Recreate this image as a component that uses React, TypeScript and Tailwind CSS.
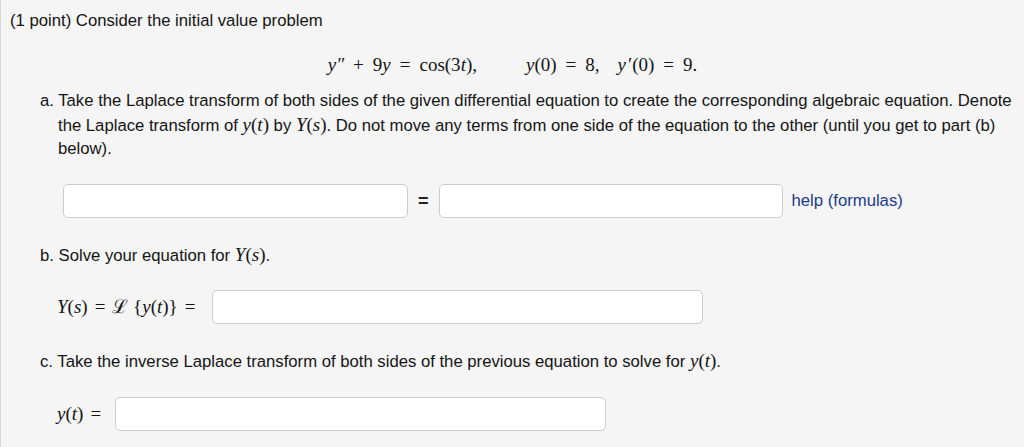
const serif = "font-['Liberation_Serif','Times_New_Roman',serif]";

function M({ children }: { children: React.ReactNode }) {
  return <span className={`${serif} text-[19px] italic`}>{children}</span>;
}

function R({ children }: { children: React.ReactNode }) {
  return <span className={`${serif} text-[19px] not-italic`}>{children}</span>;
}

function Op({ children, wide }: { children: React.ReactNode; wide?: boolean }) {
  return (
    <span className={`${serif} text-[19px] not-italic ${wide ? "mx-[9px]" : "mx-[7px]"}`}>
      {children}
    </span>
  );
}

function Field({ width }: { width: string }) {
  return (
    <input
      type="text"
      className={`${width} h-[34px] bg-white border border-[#cccccc] rounded-[5px] outline-none`}
    />
  );
}

export default function App() {
  return (
    <div className="w-[1024px] h-[447px] bg-[#f5f5f5] border-l border-[#d6d6d6] text-[#141414] font-['Liberation_Sans',Arial,sans-serif] text-[16.7px] overflow-hidden">
      <div className="pt-[11px] pl-[9px] h-[31px] flex items-end">
        <div className="h-[21px] flex items-center">(1 point) Consider the initial value problem</div>
      </div>

      {/* main equation */}
      <div className="mt-[22px] h-[24px] flex items-center justify-center whitespace-nowrap">
        <span>
          <M>y″</M>
          <Op wide>+</Op>
          <R>9</R>
          <M>y</M>
          <Op wide>=</Op>
          <R>cos(3</R>
          <M>t</M>
          <R>),</R>
        </span>
        <span className="ml-[49px]">
          <M>y</M>
          <R>(0)</R>
          <Op wide>=</Op>
          <R>8,</R>
        </span>
        <span className="ml-[18px]">
          <M>y</M>
          <R>
            <span className="ml-[2px]">′</span>(0)
          </R>
          <Op wide>=</Op>
          <R>9.</R>
        </span>
      </div>

      {/* part a */}
      <div className="mt-[12px] pl-[57px] -indent-[18px] pr-[5px] leading-[23.5px]">
        a. Take the Laplace transform of both sides of the given differential equation to create the corresponding
        algebraic equation. Denote the Laplace transform of <M>y</M>
        <R>(</R>
        <M>t</M>
        <R>)</R> by <M>Y</M>
        <R>(</R>
        <M>s</M>
        <R>)</R>. Do not move any terms from one side of the equation to the other (until you get to part (b) below).
      </div>

      <div className="mt-[23.5px] pl-[62px] flex items-center h-[34px]">
        <Field width="w-[345px]" />
        <span className="mx-[10px] text-[18px] font-bold text-[#222]">=</span>
        <Field width="w-[344px]" />
        <span className="ml-[9px] text-[#1c3a8a]">help (formulas)</span>
      </div>

      {/* part b */}
      <div className="mt-[26px] pl-[39px] h-[22px] flex items-center">
        <span>
          b. Solve your equation for <M>Y</M>
          <R>(</R>
          <M>s</M>
          <R>)</R>.
        </span>
      </div>

      <div className="mt-[24px] pl-[56px] flex items-center h-[34px]">
        <span className="whitespace-nowrap">
          <M>Y</M>
          <R>(</R>
          <M>s</M>
          <R>)</R>
          <Op>=</Op>
          <R>ℒ {"{"}</R>
          <M>y</M>
          <R>(</R>
          <M>t</M>
          <R>){"}"}</R>
          <Op>=</Op>
        </span>
        <span className="ml-[10px]">
          <Field width="w-[491px]" />
        </span>
      </div>

      {/* part c */}
      <div className="mt-[26px] pl-[39px] h-[22px] flex items-center">
        <span>
          c. Take the inverse Laplace transform of both sides of the previous equation to solve for <M>y</M>
          <R>(</R>
          <M>t</M>
          <R>)</R>.
        </span>
      </div>

      <div className="mt-[25px] pl-[56px] flex items-center h-[34px]">
        <span className="whitespace-nowrap">
          <M>y</M>
          <R>(</R>
          <M>t</M>
          <R>)</R>
          <Op>=</Op>
        </span>
        <span className="ml-[7px]">
          <Field width="w-[491px]" />
        </span>
      </div>
    </div>
  );
}
